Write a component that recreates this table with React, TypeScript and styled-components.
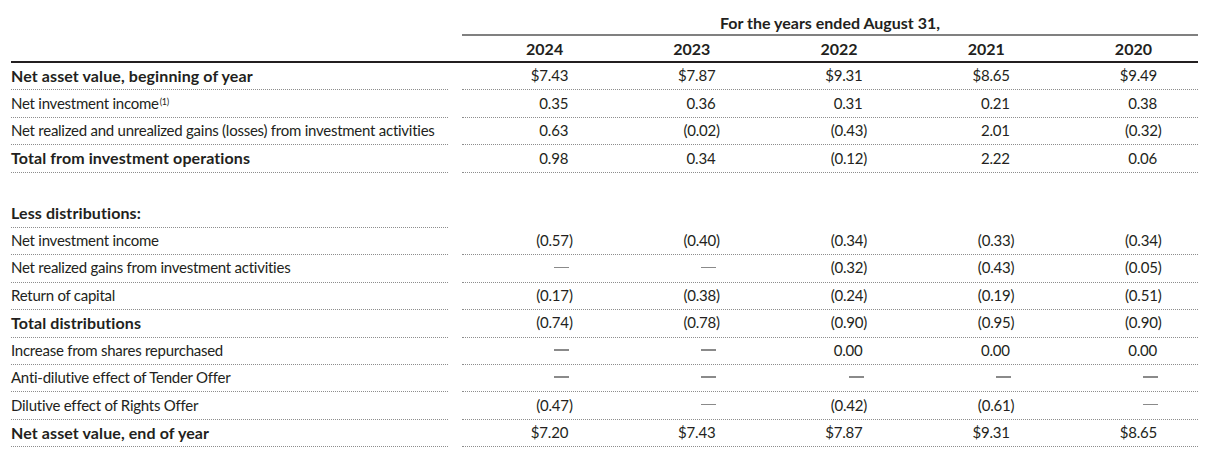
import React from 'react';
import styled, { createGlobalStyle } from 'styled-components';

const GlobalStyle = createGlobalStyle`
  body {
    margin: 0;
    background: #fff;
    color: #231f20;
    font-family: Lato, "Liberation Sans", sans-serif;
  }
`;

type Cell = string | null;

interface RowData {
  label: string,
  note?: string,
  bold?: boolean,
  values?: Cell[],
  noValueRule?: boolean,
}

const YEARS = ['2024', '2023', '2022', '2021', '2020'];

const ROWS: RowData[] = [
  { label: 'Net asset value, beginning of year', bold: true, values: ['$7.43', '$7.87', '$9.31', '$8.65', '$9.49'] },
  { label: 'Net investment income', note: '(1)', values: ['0.35', '0.36', '0.31', '0.21', '0.38'] },
  { label: 'Net realized and unrealized gains (losses) from investment activities', values: ['0.63', '(0.02)', '(0.43)', '2.01', '(0.32)'] },
  { label: 'Total from investment operations', bold: true, values: ['0.98', '0.34', '(0.12)', '2.22', '0.06'] },
  { label: '' },
  { label: 'Less distributions:', bold: true, noValueRule: true },
  { label: 'Net investment income', values: ['(0.57)', '(0.40)', '(0.34)', '(0.33)', '(0.34)'] },
  { label: 'Net realized gains from investment activities', values: [null, null, '(0.32)', '(0.43)', '(0.05)'] },
  { label: 'Return of capital', values: ['(0.17)', '(0.38)', '(0.24)', '(0.19)', '(0.51)'] },
  { label: 'Total distributions', bold: true, values: ['(0.74)', '(0.78)', '(0.90)', '(0.95)', '(0.90)'] },
  { label: 'Increase from shares repurchased', values: [null, null, '0.00', '0.00', '0.00'] },
  { label: 'Anti-dilutive effect of Tender Offer', values: [null, null, null, null, null] },
  { label: 'Dilutive effect of Rights Offer', values: ['(0.47)', null, '(0.42)', '(0.61)', null] },
  { label: 'Net asset value, end of year', bold: true, values: ['$7.20', '$7.43', '$7.87', '$9.31', '$8.65'] },
];

const Table = styled.div`
  width: 1187px;
  padding-left: 11px;
`;

const HeaderRow = styled.div`
  display: flex;
`;

const YearsRow = styled.div`
  display: flex;
  height: 25px;
  border-bottom: 2px solid #231f20;
`;

const Spacer = styled.div`
  width: 451px;
  flex-shrink: 0;
`;

const Title = styled.div`
  flex: 1;
  height: 36px;
  display: flex;
  align-items: flex-end;
  justify-content: center;
  padding-bottom: 1px;
  box-sizing: border-box;
  border-bottom: 2px solid #808080;
  font-size: 16px;
  font-weight: 700;
  line-height: 20px;
`;

const Columns = styled.div<{ $rule?: boolean }>`
  flex: 1;
  display: grid;
  grid-template-columns: repeat(5, 1fr);
  border-bottom: ${(p) => (p.$rule ? '1px dotted #8d8d8d' : '1px solid transparent')};
`;

const Year = styled.div`
  display: flex;
  align-items: center;
  justify-content: flex-end;
  padding-right: 46px;
  font-size: 16px;
  font-weight: 700;
`;

const Row = styled.div`
  display: flex;
  height: 27.46px;
`;

const Label = styled.div<{ $bold?: boolean; $rule?: boolean }>`
  width: 437px;
  flex-shrink: 0;
  margin-right: 14px;
  display: flex;
  align-items: center;
  padding-bottom: 2px;
  box-sizing: border-box;
  border-bottom: ${(p) => (p.$rule ? '1px dotted #8d8d8d' : '1px solid transparent')};
  white-space: nowrap;
  font-size: ${(p) => (p.$bold ? '16px' : '15px')};
  font-weight: ${(p) => (p.$bold ? 700 : 400)};
  letter-spacing: ${(p) => (p.$bold ? '0.1px' : '-0.25px')};
`;

const Note = styled.sup`
  font-size: 9px;
  line-height: 0;
  margin-left: 1px;
  position: relative;
  top: -1px;
`;

const Value = styled.div`
  display: flex;
  align-items: center;
  justify-content: flex-end;
  padding-right: 41px;
  padding-bottom: 2px;
  font-size: 15px;
  font-weight: 400;
  letter-spacing: -0.2px;
  white-space: nowrap;
`;

const Close = styled.span`
  margin-right: -4.5px;
`;

const Dash = styled.span`
  display: inline-block;
  width: 15px;
  height: 1.5px;
  margin-right: -1px;
  background: #8a8a8a;
`;

const Amount = ({ value }: { value: Cell }) => {
  if (value === null) {
    return <Value><Dash /></Value>;
  }
  if (value.endsWith(')')) {
    return (
      <Value>
        {value.slice(0, -1)}
        <Close>)</Close>
      </Value>
    );
  }
  return <Value>{value}</Value>;
};

export default function App() {
  return (
    <>
      <GlobalStyle />
      <Table>
        <HeaderRow>
          <Spacer />
          <Title>For the years ended August 31,</Title>
        </HeaderRow>
        <YearsRow>
          <Spacer />
          <Columns>
            {YEARS.map((y) => <Year key={y}>{y}</Year>)}
          </Columns>
        </YearsRow>
        {ROWS.map((row, i) => {
          const blank = row.label === '';
          return (
            <Row key={i}>
              <Label $bold={row.bold} $rule={!blank}>
                {row.label}
                {row.note && <Note>{row.note}</Note>}
              </Label>
              <Columns $rule={!blank && !row.noValueRule}>
                {row.values?.map((v, j) => <Amount key={j} value={v} />)}
              </Columns>
            </Row>
          );
        })}
      </Table>
    </>
  );
}
